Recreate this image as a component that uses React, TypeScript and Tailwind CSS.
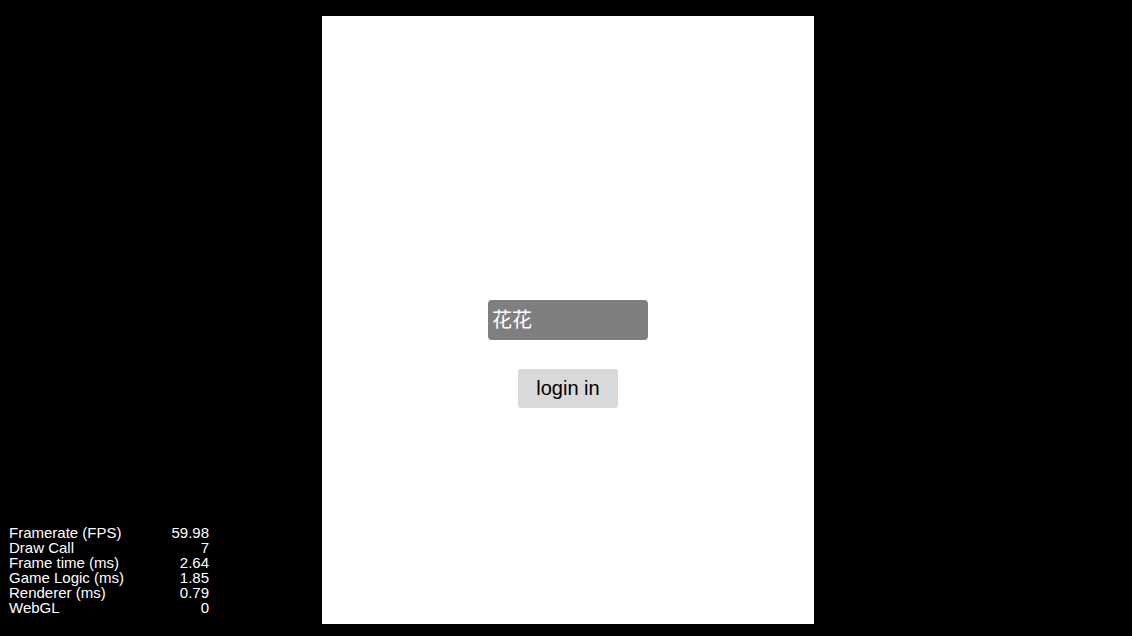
const stats: [string, string][] = [
  ["Framerate (FPS)", "59.98"],
  ["Draw Call", "7"],
  ["Frame time (ms)", "2.64"],
  ["Game Logic (ms)", "1.85"],
  ["Renderer (ms)", "0.79"],
  ["WebGL", "0"],
];

export default function App() {
  return (
    <div className="relative w-[1132px] h-[636px] bg-black overflow-hidden font-['Liberation_Sans',Arial,sans-serif]">
      <div className="pl-[322px] pt-[16px]">
        {/* Game canvas */}
        <div className="w-[492px] h-[608px] bg-white flex flex-col items-center pt-[284px]">
          <input
            defaultValue="花花"
            className="w-[160px] h-[40px] rounded-[4px] bg-[#7f7f7f] text-white text-[20px] pl-[4px] pb-[3px] outline-none font-['Liberation_Sans','Noto_Sans_CJK_SC',sans-serif]"
          />
          <button className="mt-[29px] w-[100px] h-[39px] rounded-[3px] bg-[#d9d9d9] text-black text-[20px] pb-[1px]">
            login in
          </button>
        </div>
      </div>

      {/* Debug stats */}
      <div className="absolute left-[9px] bottom-[21px] w-[200px] text-white text-[15px] leading-[15px]">
        {stats.map(([label, value]) => (
          <div key={label} className="flex justify-between">
            <span>{label}</span>
            <span>{value}</span>
          </div>
        ))}
      </div>
    </div>
  );
}
